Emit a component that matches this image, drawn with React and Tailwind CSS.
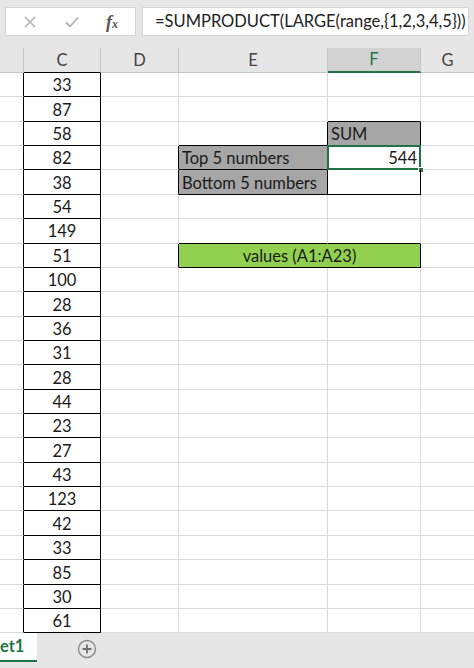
import React from 'react';

const values = [33, 87, 58, 82, 38, 54, 149, 51, 100, 28, 36, 31, 28, 44, 23, 27, 43, 123, 42, 33, 85, 30, 61];

const FormulaBar = () => (
    <div className="flex h-[48px] items-start gap-[6px] bg-[#e6e6e6] px-[5px] pt-[7px]">
        {/* name box buttons */}
        <div className="flex h-[29px] w-[131px] items-center border border-[#d4d4d4] bg-white">
            <svg width="14" height="14" viewBox="0 0 14 14" className="ml-[17px]">
                <path d="M2 2 L12 12 M12 2 L2 12" stroke="#b3b3b3" strokeWidth="1.6" fill="none" />
            </svg>
            <svg width="16" height="14" viewBox="0 0 16 14" className="ml-[27px]">
                <path d="M2 7.5 L6 11.5 L14 2.5" stroke="#b3b3b3" strokeWidth="1.8" fill="none" />
            </svg>
            <span className="ml-[26px] font-['Liberation_Serif',serif] text-[18px] font-bold italic leading-none text-[#555]">
                f<span className="text-[12px]">x</span>
            </span>
        </div>
        <div className="flex h-[29px] flex-1 items-center border border-[#d4d4d4] bg-white pl-[12px] font-['Lato',sans-serif] text-[16.5px] text-[#222]">
            =SUMPRODUCT(LARGE(range,{'{'}1,2,3,4,5{'}'}))
        </div>
    </div>
);

const HeaderRow = () => (
    <div className="flex h-[25px] bg-[#e6e6e6] font-['Lato',sans-serif] text-[16.5px] text-[#444]">
        <div className="w-[24px] border-r border-b border-[#c4c4c4]" />
        <div className="flex w-[77px] items-center justify-center border-r border-b border-r-[#c4c4c4] border-b-black">C</div>
        <div className="flex w-[78px] items-center justify-center border-r border-b border-[#c4c4c4]">D</div>
        <div className="flex w-[149px] items-center justify-center border-r border-b border-[#c4c4c4]">E</div>
        <div className="flex w-[93px] items-center justify-center border-r border-b-2 border-r-[#c4c4c4] border-b-[#217346] bg-[#d2d2d2] text-[#217346]">F</div>
        <div className="flex flex-1 items-center justify-center border-b border-[#c4c4c4]">G</div>
    </div>
);

const Row = ({ i, value }) => {
    const grayE = i === 3 || i === 4;
    const boxE = i === 2 || i === 3 || i === 4;
    return (
        <div className="flex h-[24.36px] font-['Lato',sans-serif] text-[16.5px] text-[#1a1a1a]">
            <div className="w-[24px] border-r border-b border-r-black border-b-[#dadada]" />
            <div className="flex w-[77px] items-center justify-center border-r border-b border-black pt-[2px]">{value}</div>
            <div className={`w-[78px] border-r border-b border-b-[#dadada] ${i === 3 || i === 4 || i === 7 ? 'border-r-black' : 'border-r-[#dadada]'}`} />
            {i === 7 ? (
                <div className="flex w-[242px] items-center justify-center border-r border-b border-black bg-[#92d050] pt-[2px]">
                    values (A1:A23)
                </div>
            ) : (
                <>
                    <div
                        className={`flex w-[149px] items-center border-r border-b pl-[3px] pt-[2px] ${grayE ? 'bg-[#a6a6a6]' : ''} ${boxE ? 'border-r-black' : 'border-r-[#dadada]'} ${boxE || i === 6 ? 'border-b-black' : 'border-b-[#dadada]'}`}
                    >
                        {i === 3 && 'Top 5 numbers'}
                        {i === 4 && 'Bottom 5 numbers'}
                    </div>
                    <div
                        className={`relative flex w-[93px] items-center border-r border-b px-[3px] pt-[2px] ${i === 2 ? 'bg-[#a6a6a6]' : ''} ${boxE ? 'border-r-black' : 'border-r-[#dadada]'} ${boxE || i === 1 || i === 6 ? 'border-b-black' : 'border-b-[#dadada]'} ${i === 3 ? 'justify-end' : ''}`}
                    >
                        {i === 2 && 'SUM'}
                        {i === 3 && '544'}
                        {i === 3 && (
                            <>
                                <div className="absolute -top-[1px] -left-[1px] -right-[1px] -bottom-[1px] border-2 border-[#217346]" />
                                <div className="absolute -right-[4px] -bottom-[4px] h-[6px] w-[6px] border border-white bg-[#217346]" />
                            </>
                        )}
                    </div>
                </>
            )}
            <div className="flex-1 border-b border-[#dadada]" />
        </div>
    );
};

const SheetTabs = () => (
    <div className="flex h-[35px] items-start bg-[#e6e6e6]">
        <div className="flex h-[29px] w-[37px] items-center border-b-2 border-[#217346] bg-white font-['Lato',sans-serif] text-[16.5px] font-bold text-[#217346]">
            et1
        </div>
        <svg width="20" height="20" viewBox="0 0 20 20" className="ml-[40px] mt-[6px]">
            <circle cx="10" cy="10" r="8.5" stroke="#8a8a8a" strokeWidth="1.4" fill="none" />
            <path d="M10 5.5 V14.5 M5.5 10 H14.5" stroke="#707070" strokeWidth="1.8" />
        </svg>
    </div>
);

export default function App() {
    return (
        <div className="h-[668px] w-[474px] overflow-hidden bg-white">
            <FormulaBar />
            <HeaderRow />
            {values.map((v, i) => (
                <Row key={i} i={i} value={v} />
            ))}
            <SheetTabs />
        </div>
    );
}
